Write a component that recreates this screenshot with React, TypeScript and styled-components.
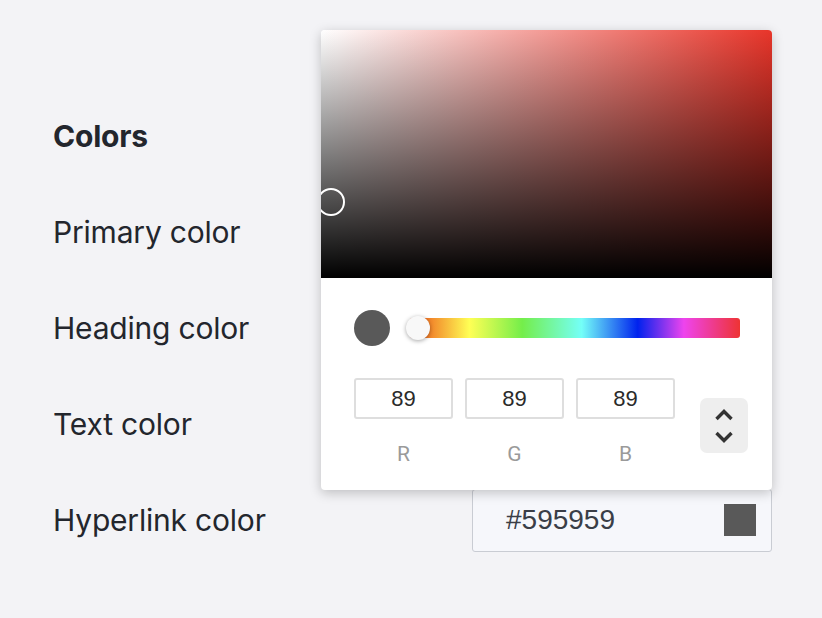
import React from "react";
import styled, { createGlobalStyle } from "styled-components";

const GlobalStyle = createGlobalStyle`
  html, body {
    margin: 0;
    padding: 0;
    background: #f3f3f6;
  }
  body {
    font-family: "Inter", "Liberation Sans", sans-serif;
    color: #23262d;
  }
`;

const rows = ["Primary color", "Heading color", "Text color", "Hyperlink color"];
const hex = "#595959";

export default function App() {
  return (
    <Page>
      <GlobalStyle />
      <Heading>Colors</Heading>
      {rows.map((label) => (
        <Row key={label}>
          <Label>{label}</Label>
          <HexField>
            <HexText>{hex}</HexText>
            <Swatch $color={hex} />
          </HexField>
        </Row>
      ))}

      <Picker>
        <SatPanel>
          <SatCursor />
        </SatPanel>
        <PickerBody>
          <SliderRow>
            <Preview $color={hex} />
            <HueTrack>
              <HueThumb />
            </HueTrack>
          </SliderRow>
          <ChannelRow>
            {["R", "G", "B"].map((c) => (
              <Channel key={c}>
                <ChannelBox>89</ChannelBox>
                <ChannelLabel>{c}</ChannelLabel>
              </Channel>
            ))}
            <ModeToggle>
              <svg width="20" height="36" viewBox="0 0 20 36" fill="none">
                <path d="M2.5 11 L10 3.5 L17.5 11" stroke="#333" strokeWidth="3.4" />
                <path d="M2.5 25 L10 32.5 L17.5 25" stroke="#333" strokeWidth="3.4" />
              </svg>
            </ModeToggle>
          </ChannelRow>
        </PickerBody>
      </Picker>
    </Page>
  );
}

const Page = styled.main`
  position: relative;
  width: 822px;
  height: 618px;
  padding: 88px 0 0 53px;
  box-sizing: border-box;
  overflow: hidden;
`;

const Heading = styled.h2`
  margin: 0;
  height: 96px;
  line-height: 96px;
  font-size: 30px;
  font-weight: 700;
  letter-spacing: -0.2px;
`;

const Row = styled.div`
  display: grid;
  grid-template-columns: 419px 300px;
  align-items: center;
  height: 96px;
`;

const Label = styled.span`
  font-size: 30px;
  font-weight: 400;
  letter-spacing: -0.2px;
`;

const HexField = styled.div`
  display: flex;
  align-items: center;
  justify-content: space-between;
  height: 63px;
  box-sizing: border-box;
  padding: 0 15px 0 33px;
  border: 1px solid #c9ccd3;
  border-radius: 3px;
  background: #f6f7fb;
`;

const HexText = styled.span`
  font-family: "Liberation Sans", Arial, sans-serif;
  font-size: 28px;
  color: #3a3e47;
`;

const Swatch = styled.span<{ $color: string }>`
  width: 32px;
  height: 32px;
  background: ${(p) => p.$color};
`;

const Picker = styled.div`
  position: absolute;
  left: 321px;
  top: 30px;
  width: 451px;
  height: 460px;
  display: flex;
  flex-direction: column;
  background: #fff;
  border-radius: 4px;
  box-shadow: 0 3px 12px rgba(0, 0, 0, 0.22);
  overflow: hidden;
`;

const SatPanel = styled.div`
  position: relative;
  height: 248px;
  flex: none;
  background: linear-gradient(to top, #000, rgba(0, 0, 0, 0)),
    linear-gradient(to right, #fff, #e8352a);
`;

const SatCursor = styled.span`
  position: absolute;
  left: -4px;
  top: 158px;
  width: 24px;
  height: 24px;
  border: 2.5px solid #fff;
  border-radius: 50%;
`;

const PickerBody = styled.div`
  flex: 1;
  padding: 32px 24px 0 33px;
`;

const SliderRow = styled.div`
  display: flex;
  align-items: center;
  gap: 20px;
  height: 36px;
  margin-right: 8px;
`;

const Preview = styled.span<{ $color: string }>`
  width: 36px;
  height: 36px;
  border-radius: 50%;
  background: ${(p) => p.$color};
  flex: none;
`;

const HueTrack = styled.div`
  position: relative;
  flex: 1;
  height: 20px;
  border-radius: 3px;
  background: linear-gradient(
    to right,
    #f23a22 0%,
    #f2852a 6%,
    #ffff55 18%,
    #74ee4a 34%,
    #74fff8 52%,
    #0022ee 69%,
    #ee44ee 83%,
    #ee3333 100%
  );
`;

const HueThumb = styled.span`
  position: absolute;
  left: -4px;
  top: -2px;
  width: 24px;
  height: 24px;
  border-radius: 50%;
  background: #f8f8f8;
  box-shadow: 0 1px 4px rgba(0, 0, 0, 0.35);
`;

const ChannelRow = styled.div`
  display: flex;
  align-items: flex-start;
  gap: 12px;
  margin-top: 32px;
`;

const Channel = styled.div`
  display: flex;
  flex-direction: column;
  align-items: center;
  width: 99px;
  flex: none;
`;

const ChannelBox = styled.div`
  width: 100%;
  height: 41px;
  box-sizing: border-box;
  display: flex;
  align-items: center;
  justify-content: center;
  border: 2px solid #dedede;
  border-radius: 3px;
  font-family: "Liberation Sans", Arial, sans-serif;
  font-size: 22px;
  color: #2b2b2b;
`;

const ChannelLabel = styled.span`
  margin-top: 23px;
  font-family: "Roboto", "Liberation Sans", sans-serif;
  font-size: 21px;
  color: #9a9a9a;
`;

const ModeToggle = styled.button`
  margin: 20px 0 0 13px;
  width: 48px;
  height: 55px;
  flex: none;
  border: none;
  border-radius: 7px;
  background: #eeeeee;
  display: flex;
  align-items: center;
  justify-content: center;
  padding: 0;
`;
